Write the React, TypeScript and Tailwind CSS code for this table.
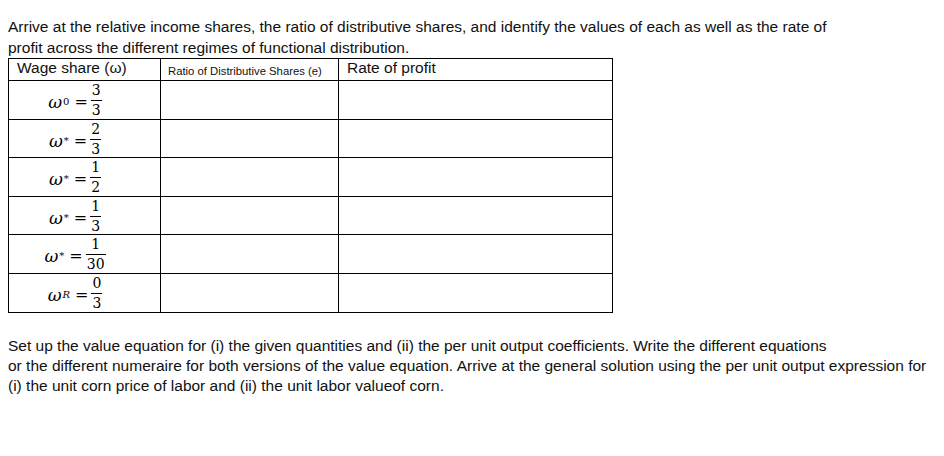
const rows = [
  { sup: '0', num: '3', den: '3' },
  { sup: '*', num: '2', den: '3' },
  { sup: '*', num: '1', den: '2' },
  { sup: '*', num: '1', den: '3' },
  { sup: '*', num: '1', den: '30' },
  { sup: 'R', num: '0', den: '3' },
]

const heights = ['h-[39px]', 'h-[38px]', 'h-[39px]', 'h-[38px]', 'h-[39px]', 'h-[39px]']

function Fraction({ num, den }: { num: string; den: string }) {
  return (
    <span className="inline-flex flex-col items-center leading-none text-[14px]">
      <span className="px-[1px] pb-[3px]">{num}</span>
      <span className="px-[1px] pt-[2px] border-t border-black">{den}</span>
    </span>
  )
}

function Formula({ sup, num, den }: { sup: string; num: string; den: string }) {
  return (
    <span className="inline-flex items-center font-['DejaVu_Serif',serif] text-black">
      <span className="italic text-[17px] mt-[5px] leading-none">
        ω<sup className="not-italic text-[10px] relative -top-[3px] ml-[1px]">{sup === 'R' ? <i>R</i> : sup}</sup>
      </span>
      <span className="ml-[5px] mr-[3px] text-[16px] mt-[4px] leading-none">=</span>
      <Fraction num={num} den={den} />
    </span>
  )
}

export default function App() {
  return (
    <div className="w-[944px] h-[456px] bg-white text-[#111] font-['Liberation_Sans',Arial,sans-serif] text-[15.5px]">
      <div className="pt-4 pl-2">
        <p className="leading-[21px] whitespace-nowrap">
          Arrive at the relative income shares, the ratio of distributive shares, and identify the values of each as well as the rate of
          <br />
          profit across the different regimes of functional distribution.
        </p>

        {/* table */}
        <div className="grid grid-cols-[152px_178px_274px] w-fit border-l border-t border-black">
          <div className="h-[22px] border-r border-b border-black pl-2 leading-[18px]">Wage share (ω)</div>
          <div className="h-[22px] border-r border-b border-black pl-[7px] text-[11.3px] leading-[14px] pt-[5px] whitespace-nowrap">
            Ratio of Distributive Shares (e)
          </div>
          <div className="h-[22px] border-r border-b border-black pl-2 leading-[18px]">Rate of profit</div>

          {rows.map((r, i) => (
            <div key={i} className="contents">
              <div className={`${heights[i]} border-r border-b border-black flex items-center justify-center pr-[19px]`}>
                <Formula sup={r.sup} num={r.num} den={r.den} />
              </div>
              <div className={`${heights[i]} border-r border-b border-black`} />
              <div className={`${heights[i]} border-r border-b border-black`} />
            </div>
          ))}
        </div>

        <p className="mt-[23px] leading-[20px] whitespace-nowrap">
          Set up the value equation for (i) the given quantities and (ii) the per unit output coefficients. Write the different equations
          <br />
          or the different numeraire for both versions of the value equation. Arrive at the general solution using the per unit output expression for
          <br />
          (i) the unit corn price of labor and (ii) the unit labor valueof corn.
        </p>
      </div>
    </div>
  )
}
